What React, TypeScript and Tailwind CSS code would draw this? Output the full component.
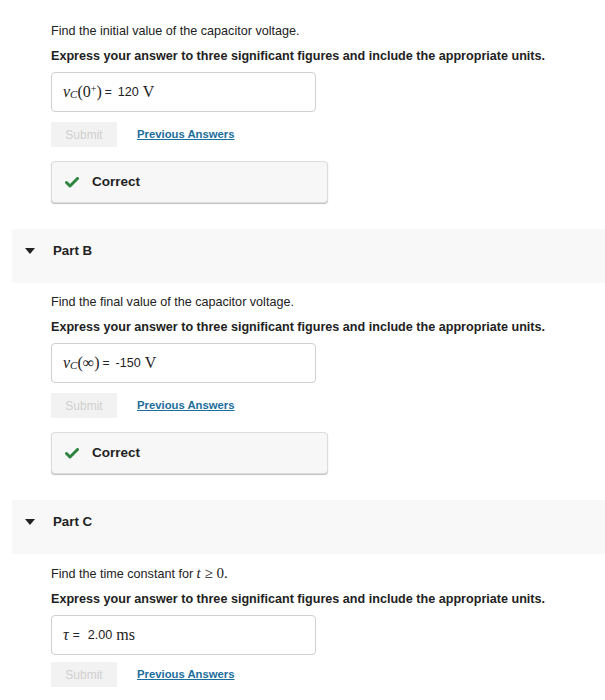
import React from "react";

type Part = {
  label?: string;
  prompt: React.ReactNode;
  answer: React.ReactNode;
  correct: boolean;
};

const serif = { fontFamily: '"Liberation Serif", "DejaVu Serif", serif' };

const V = () => (
  <span className="italic text-[16px]" style={serif}>
    v<sub className="text-[11px] italic relative top-[1px]">C</sub>
  </span>
);

const parts: Part[] = [
  {
    prompt: "Find the initial value of the capacitor voltage.",
    answer: (
      <>
        <V />
        <span className="text-[16px]" style={serif}>
          (0<sup className="text-[10px]">+</sup>)
        </span>
        <span className="ml-[3px] text-[12px]">=</span>
        <span className="ml-[6px]">120</span>
        <span className="ml-[4px] text-[16px]" style={serif}>V</span>
      </>
    ),
    correct: true,
  },
  {
    label: "Part B",
    prompt: "Find the final value of the capacitor voltage.",
    answer: (
      <>
        <V />
        <span className="text-[16px]" style={serif}>(∞)</span>
        <span className="ml-[3px] text-[12px]">=</span>
        <span className="ml-[6px]">-150</span>
        <span className="ml-[4px] text-[16px]" style={serif}>V</span>
      </>
    ),
    correct: true,
  },
  {
    label: "Part C",
    prompt: (
      <>
        Find the time constant for{" "}
        <span className="italic text-[15px]" style={serif}>t</span>
        <span className="text-[15px]" style={serif}> ≥ 0.</span>
      </>
    ),
    answer: (
      <>
        <span className="italic text-[16px]" style={serif}>τ</span>
        <span className="ml-[4px] text-[12px]">=</span>
        <span className="ml-[8px]">2.00</span>
        <span className="ml-[4px] text-[16px]" style={serif}>ms</span>
      </>
    ),
    correct: false,
  },
];

const Check = () => (
  <svg width="14" height="11" viewBox="0 0 14 11">
    <path d="M1.5 5.5 L5 9 L12.5 1.5" fill="none" stroke="#2e8540" strokeWidth="3" strokeLinecap="round" strokeLinejoin="round" />
  </svg>
);

export default function App() {
  return (
    <div
      className="w-[605px] h-[700px] overflow-hidden bg-white text-[#222]"
      style={{ fontFamily: '"Liberation Sans", Arial, sans-serif' }}
    >
      {parts.map((p, i) => (
        <div key={i}>
          {p.label && (
            <div className="ml-[12px] h-[54px] bg-[#f8f8f8] flex items-start pt-[14px]">
              <svg width="10" height="6" viewBox="0 0 10 6" className="ml-[13px] mt-[5px]">
                <path d="M0 0 L10 0 L5 6 Z" fill="#222" />
              </svg>
              <span className="ml-[18px] text-[13.3px] leading-[16px] font-bold">{p.label}</span>
            </div>
          )}
          <div className={`pl-[51px] pb-[26px] ${p.label ? "pt-[11px]" : "pt-[23px]"}`}>
            <p className="text-[12.6px] leading-[17px]">{p.prompt}</p>
            <p className="mt-[8px] text-[12.6px] leading-[17px] font-bold">
              Express your answer to three significant figures and include the appropriate units.
            </p>
            <div className="mt-[7px] w-[265px] h-[40px] border border-[#cfcfcf] rounded-[4px] flex items-center pl-[11px] text-[12.6px]">
              {p.answer}
            </div>
            <div className={`${p.correct ? "mt-[10px]" : "mt-[7px]"} flex items-center`}>
              <div className="w-[66px] h-[25px] bg-[#f2f2f2] text-[#d0d0d0] text-[12px] flex items-center justify-center">
                Submit
              </div>
              <a href="#" className="ml-[20px] text-[11.3px] font-bold underline text-[#1c6e9c]">
                Previous Answers
              </a>
            </div>
            {p.correct && (
              <div className="mt-[14px] w-[277px] h-[42px] bg-[#f7f7f7] border border-[#dcdcdc] rounded-[4px] shadow-[0_1px_1px_rgba(0,0,0,0.25)] flex items-center pl-[13px]">
                <Check />
                <span className="ml-[13px] text-[13.5px] font-bold">Correct</span>
              </div>
            )}
          </div>
        </div>
      ))}
    </div>
  );
}
